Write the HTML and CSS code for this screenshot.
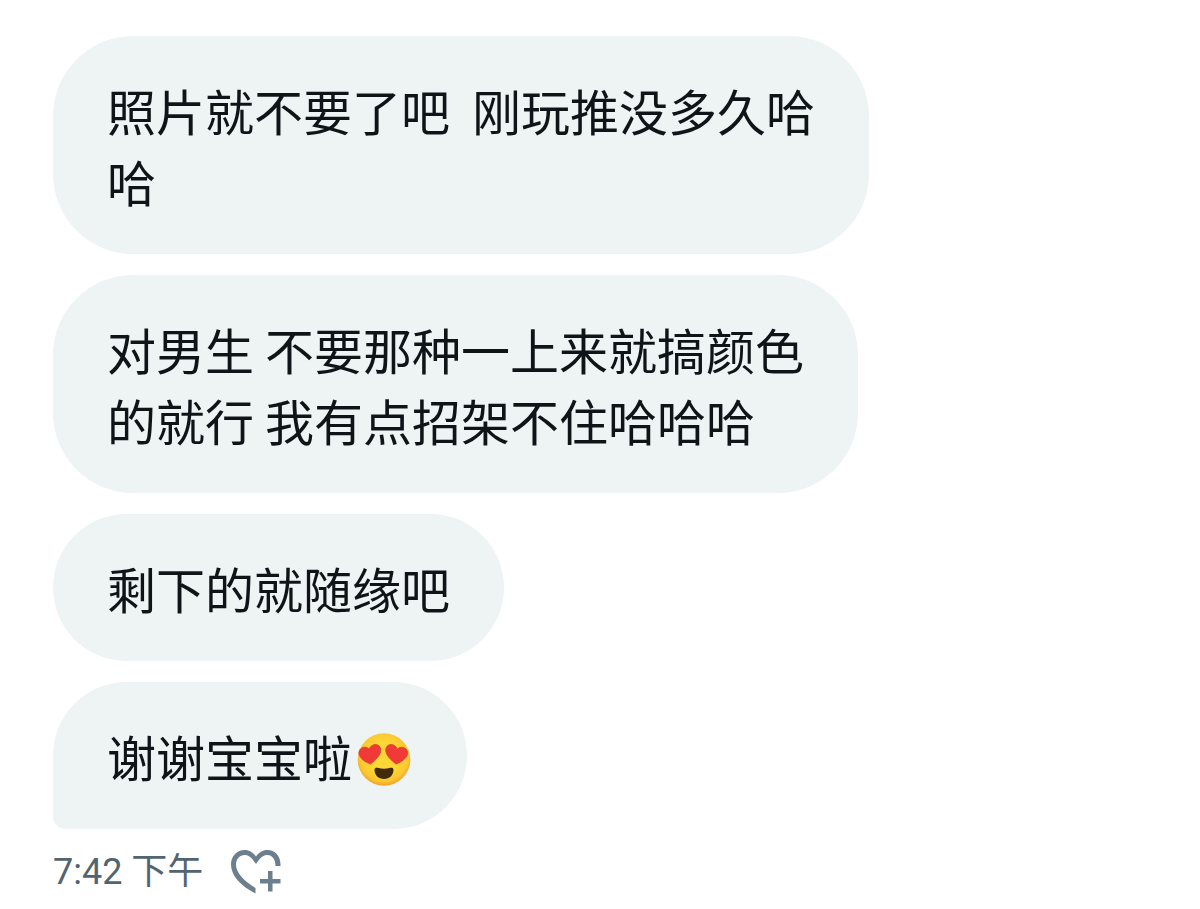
FILE: index.html
```html
<!DOCTYPE html>
<html lang="zh-CN">

<head>
  <meta charset="UTF-8">
  <meta name="viewport" content="width=device-width, initial-scale=1.0">
  <title>私信</title>
  <link rel="stylesheet" href="styles.css">
</head>

<body>
  <main class="chat">
    <p class="bubble">照片就不要了吧&nbsp; 刚玩推没多久哈<br>哈</p>
    <p class="bubble">对男生 不要那种一上来就搞颜色<br>的就行 我有点招架不住哈哈哈</p>
    <p class="bubble">剩下的就随缘吧</p>
    <p class="bubble last">谢谢宝宝啦<svg class="emoji" viewBox="0 0 54 54" role="img" aria-label="花痴">
        <defs>
          <radialGradient id="face" cx="50%" cy="45%" r="55%">
            <stop offset="0.5" stop-color="#fdd835" />
            <stop offset="0.85" stop-color="#fbc62f" />
            <stop offset="1" stop-color="#ee9f2c" />
          </radialGradient>
        </defs>
        <circle cx="27" cy="26.5" r="26.3" fill="url(#face)" />
        <g fill="#f03a38" stroke="#d9402a" stroke-width="0.8">
          <path d="M13.500 31C8 29 3 25.500 2 21C1 16 7 11.500 12.300 16C14 10.500 22.500 9.500 23.700 16C24.500 22 18.500 27 13.500 31Z" />
          <path d="M39 31C44.500 29 49.500 25.500 50.500 21C51.500 16 45.500 11.500 40.200 16C38.500 10.500 30 9.500 28.800 16C28 22 34 27 39 31Z" />
        </g>
        <path fill="#422b0d" d="M17.500 37C17.500 34.500 19.500 34.500 21.500 35C25 36 29 36 32.500 35C34.500 34.500 36.500 34.500 36.500 37C36.500 42 32.500 46 27 46S17.500 42 17.500 37Z" />
      </svg></p>
    <div class="meta">
      <time datetime="19:42">7:42 下午</time>
      <button class="react" type="button" aria-label="添加心情">
        <svg viewBox="0 0 50 44" fill="#6b7f8e">
          <path d="M24.500 43.500C10 36 0 26 0 14.500C0 5.500 6.500 0 13.500 0C18.500 0 22 2.500 25 6.500C28 2.500 31.500 0 36.500 0C44 0 50 6 49.500 16H44.500C44.500 9 41 5 36.500 5C32 5 29.500 7.500 25 14C20.500 7.500 18 5 13.500 5C9 5 5 9 5 14.500C5 23 13 31 24.500 38Z" />
          <path d="M37 21H41.500V29H49.500V33.500H41.500V41.500H37V33.500H29V29H37Z" />
        </svg>
      </button>
    </div>
  </main>
</body>

</html>
```

FILE: styles.css
```css
* {
  margin: 0;
  padding: 0;
  box-sizing: border-box;
}

body {
  background-color: #fff;
  color: #0f1419;
  font-family: 'Noto Sans CJK SC', sans-serif;
}

.chat {
  display: flex;
  flex-direction: column;
  align-items: flex-start;
  gap: 21px;
  padding: 36px 53px 0;
}

.bubble {
  padding: 38px 54px;
  border-radius: 80px;
  background-color: #eef3f4;
  font-size: 49px;
  line-height: 71px;
}

.last {
  border-bottom-left-radius: 14px;
}

.emoji {
  width: 54px;
  height: 54px;
  margin: 0 2px 0 5px;
  vertical-align: -10px;
}

.meta {
  display: flex;
  align-items: center;
  gap: 28px;
  color: #536471;
  font-family: Roboto, 'Noto Sans CJK SC', sans-serif;
  font-size: 36px;
  line-height: 44px;
}

.react {
  border: none;
  background: transparent;
  cursor: pointer;
}

.react svg {
  display: block;
  width: 50px;
  height: 44px;
}
```
